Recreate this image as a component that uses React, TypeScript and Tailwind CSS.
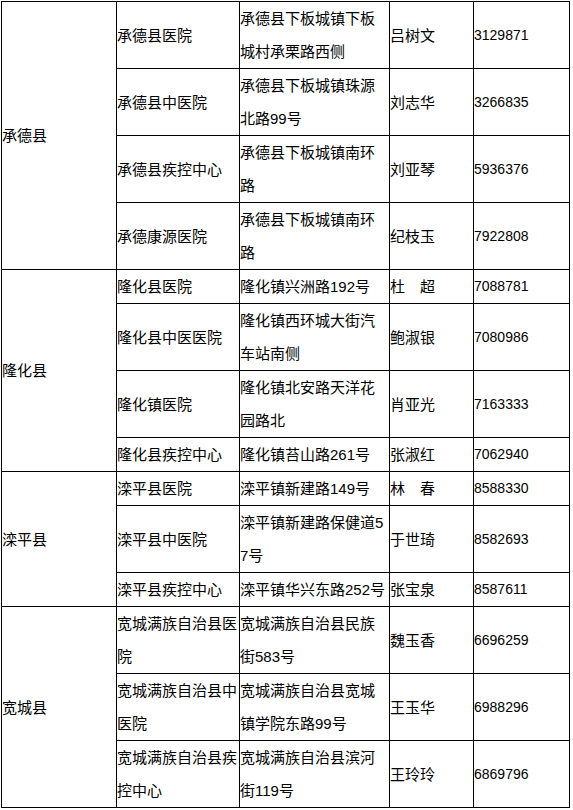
type Row = { name: string[]; addr: string[]; person: string; phone: string };
type Group = { county: string; rows: Row[] };

const groups: Group[] = [
  {
    county: "承德县",
    rows: [
      { name: ["承德县医院"], addr: ["承德县下板城镇下板", "城村承栗路西侧"], person: "吕树文", phone: "3129871" },
      { name: ["承德县中医院"], addr: ["承德县下板城镇珠源", "北路99号"], person: "刘志华", phone: "3266835" },
      { name: ["承德县疾控中心"], addr: ["承德县下板城镇南环", "路"], person: "刘亚琴", phone: "5936376" },
      { name: ["承德康源医院"], addr: ["承德县下板城镇南环", "路"], person: "纪枝玉", phone: "7922808" },
    ],
  },
  {
    county: "隆化县",
    rows: [
      { name: ["隆化县医院"], addr: ["隆化镇兴洲路192号"], person: "杜\u3000超", phone: "7088781" },
      { name: ["隆化县中医医院"], addr: ["隆化镇西环城大街汽", "车站南侧"], person: "鲍淑银", phone: "7080986" },
      { name: ["隆化镇医院"], addr: ["隆化镇北安路天洋花", "园路北"], person: "肖亚光", phone: "7163333" },
      { name: ["隆化县疾控中心"], addr: ["隆化镇苔山路261号"], person: "张淑红", phone: "7062940" },
    ],
  },
  {
    county: "滦平县",
    rows: [
      { name: ["滦平县医院"], addr: ["滦平镇新建路149号"], person: "林\u3000春", phone: "8588330" },
      { name: ["滦平县中医院"], addr: ["滦平镇新建路保健道5", "7号"], person: "于世琦", phone: "8582693" },
      { name: ["滦平县疾控中心"], addr: ["滦平镇华兴东路252号"], person: "张宝泉", phone: "8587611" },
    ],
  },
  {
    county: "宽城县",
    rows: [
      { name: ["宽城满族自治县医", "院"], addr: ["宽城满族自治县民族", "街583号"], person: "魏玉香", phone: "6696259" },
      { name: ["宽城满族自治县中", "医院"], addr: ["宽城满族自治县宽城", "镇学院东路99号"], person: "王玉华", phone: "6988296" },
      { name: ["宽城满族自治县疾", "控中心"], addr: ["宽城满族自治县滨河", "街119号"], person: "王玲玲", phone: "6869796" },
    ],
  },
];

function Lines({ lines }: { lines: string[] }) {
  return (
    <>
      {lines.map((l, i) => (
        <div key={i}>{l}</div>
      ))}
    </>
  );
}

const cell = "border border-black p-0 align-middle text-left whitespace-nowrap";

export default function App() {
  return (
    <div className="min-h-screen bg-white text-black font-['Liberation_Sans','Noto_Sans_CJK_SC',sans-serif] text-[15px] leading-[33px]">
      <table className="ml-px mt-px border-collapse table-fixed w-[568px]">
        <colgroup>
          <col className="w-[115px]" />
          <col className="w-[123px]" />
          <col className="w-[150px]" />
          <col className="w-[84px]" />
          <col className="w-[96px]" />
        </colgroup>
        <tbody>
          {groups.map((g) =>
            g.rows.map((r, i) => (
              <tr key={g.county + i}>
                {i === 0 && (
                  <td rowSpan={g.rows.length} className={cell}>
                    {g.county}
                  </td>
                )}
                <td className={cell}>
                  <Lines lines={r.name} />
                </td>
                <td className={cell}>
                  <Lines lines={r.addr} />
                </td>
                <td className={cell}>{r.person}</td>
                <td className={cell + " text-[14px]"}>{r.phone}</td>
              </tr>
            ))
          )}
        </tbody>
      </table>
    </div>
  );
}
